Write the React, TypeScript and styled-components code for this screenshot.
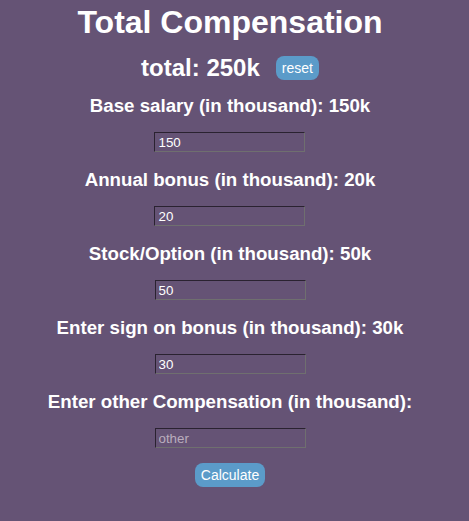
import React, { useState } from "react";
import styled, { createGlobalStyle } from "styled-components";

const Global = createGlobalStyle`
  html, body {
    margin: 0;
    padding: 0;
    background: #655375;
    font-family: "Liberation Sans", Arial, Helvetica, sans-serif;
    color: #ffffff;
  }
`;

const Page = styled.div`
  width: 460px;
  display: flex;
  flex-direction: column;
  align-items: center;
  padding-top: 4px;
  padding-bottom: 20px;
`;

const Title = styled.h1`
  margin: 0;
  font-size: 32px;
  line-height: 36px;
  font-weight: bold;
`;

const TotalRow = styled.div`
  margin-top: 14px;
  display: flex;
  align-items: center;
  gap: 16px;
  height: 27px;
`;

const TotalText = styled.h2`
  margin: 0;
  font-size: 24px;
  line-height: 27px;
  font-weight: bold;
`;

const Pill = styled.button`
  font-family: "Liberation Sans", Arial, sans-serif;
  font-size: 14px;
  color: #ffffff;
  background: #5b9bc9;
  border: none;
  border-radius: 8px;
  height: 24px;
  padding: 0 6px;
  line-height: 24px;
  cursor: pointer;
`;

const Field = styled.div`
  display: flex;
  flex-direction: column;
  align-items: center;
  margin-top: 14px;
`;

const Label = styled.h3<{ $first?: boolean }>`
  margin: 0;
  font-size: 18.7px;
  line-height: 21px;
  font-weight: bold;
`;

const Input = styled.input`
  margin-top: 16px;
  box-sizing: border-box;
  width: 151px;
  height: 20px;
  padding: 0 3px;
  background: transparent;
  color: #ffffff;
  font-family: "Liberation Sans", Arial, sans-serif;
  font-size: 13.33px;
  border-style: solid;
  border-width: 1px;
  border-color: #2a2230 #6f6f6f #6f6f6f #2a2230;
  outline: none;
  &::placeholder {
    color: #b9adbd;
  }
`;

const CalcButton = styled(Pill)`
  margin-top: 15px;
`;

const fields = [
  { label: "Base salary (in thousand): ", key: "base", init: "150", ph: "" },
  { label: "Annual bonus (in thousand): ", key: "bonus", init: "20", ph: "" },
  { label: "Stock/Option (in thousand): ", key: "stock", init: "50", ph: "" },
  { label: "Enter sign on bonus (in thousand): ", key: "sign", init: "30", ph: "" },
  { label: "Enter other Compensation (in thousand):", key: "other", init: "", ph: "other" },
];

export default function App() {
  const initial: Record<string, string> = {};
  fields.forEach((f) => (initial[f.key] = f.init));
  const [vals, setVals] = useState<Record<string, string>>(initial);
  const [total, setTotal] = useState(250);

  const calc = () => {
    const t = fields.reduce((s, f) => s + (parseFloat(vals[f.key]) || 0), 0);
    setTotal(t);
  };

  return (
    <>
      <Global />
      <Page>
        <Title>Total Compensation</Title>
        <TotalRow>
          <TotalText>total: {total}k</TotalText>
          <Pill onClick={() => { setVals(initial); setTotal(250); }}>reset</Pill>
        </TotalRow>
        {fields.map((f, i) => (
          <Field key={f.key} style={i === 0 ? undefined : { marginTop: 17 }}>
            <Label>
              {f.label}
              {f.key !== "other" && vals[f.key] !== "" ? `${vals[f.key]}k` : ""}
            </Label>
            <Input
              value={vals[f.key]}
              placeholder={f.ph}
              onChange={(e) => setVals({ ...vals, [f.key]: e.target.value })}
            />
          </Field>
        ))}
        <CalcButton onClick={calc}>Calculate</CalcButton>
      </Page>
    </>
  );
}
